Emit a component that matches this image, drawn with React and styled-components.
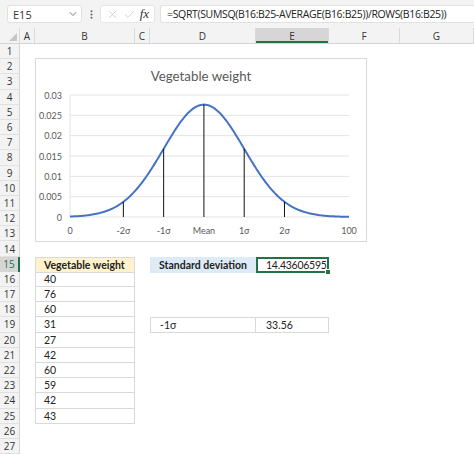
import React from "react";
import styled, { createGlobalStyle } from "styled-components";
import { ChevronDown, EllipsisVertical, X, Check } from "lucide-react";

const GlobalStyle = createGlobalStyle`
  html, body {
    margin: 0;
    padding: 0;
    background: #ffffff;
    overflow: hidden;
  }
  body {
    font-family: Lato, "Liberation Sans", sans-serif;
    color: #222;
  }
`;

const COLS = "20px 15px 100px 15px 106px 73px 71px 74px";
const ROW_H = 15.2;

const values = [40, 76, 60, 31, 27, 42, 60, 59, 42, 43];
const MEAN = 48;
const SD = 14.43606595;

const Page = styled.div`
  width: 474px;
  height: 455px;
  overflow: hidden;
`;

const FormulaBar = styled.div`
  height: 28px;
  background: #f3f3f3;
  display: flex;
  align-items: center;
  padding-left: 7px;
  box-sizing: border-box;
  font-family: "Open Sans", "Liberation Sans", sans-serif;
  font-size: 11px;
  color: #222;
`;

const NameBox = styled.div`
  width: 75px;
  height: 18px;
  box-sizing: border-box;
  background: #fff;
  border: 1px solid #e1e1e1;
  border-radius: 3px;
  display: flex;
  align-items: center;
  justify-content: space-between;
  padding: 0 2px 0 5px;
  color: #333;
`;

const Dots = styled.div`
  width: 18px;
  display: flex;
  justify-content: center;
  color: #666;
`;

const FxBox = styled.div`
  width: 55px;
  height: 18px;
  box-sizing: border-box;
  background: #fff;
  border: 1px solid #e6e6e6;
  border-radius: 3px;
  display: flex;
  align-items: center;
  justify-content: space-around;
  padding: 0 3px;
  color: #c2c2c2;
`;

const Fx = styled.span`
  font-family: "Liberation Serif", serif;
  font-style: italic;
  font-size: 13px;
  color: #333;
`;

const FormulaInput = styled.div`
  flex: 1;
  margin-left: 5px;
  height: 18px;
  box-sizing: border-box;
  background: #fff;
  border: 1px solid #e1e1e1;
  border-right: none;
  border-radius: 3px 0 0 3px;
  display: flex;
  align-items: center;
  padding-left: 6px;
  white-space: nowrap;
  overflow: hidden;
  color: #222;
  font-size: 10.5px;
  letter-spacing: -0.35px;
`;

const HeaderRow = styled.div`
  display: grid;
  grid-template-columns: ${COLS};
  height: 16px;
  background: #f3f3f3;
  border-bottom: 1px solid #d4d4d4;
  box-sizing: border-box;
  font-family: "Open Sans", "Liberation Sans", sans-serif;
  font-size: 10px;
  color: #333;
`;

const ColHead = styled.div`
  display: flex;
  align-items: center;
  justify-content: center;
  border-right: 1px solid #dadada;
  background: ${(p) => (p.$active ? "#d6d6d6" : "transparent")};
  box-shadow: ${(p) => (p.$active ? "inset 0 -2px 0 #217346" : "none")};
`;

const Corner = styled.div`
  position: relative;
  border-right: 1px solid #dadada;
  &::after {
    content: "";
    position: absolute;
    right: 2px;
    bottom: 2px;
    border-style: solid;
    border-width: 0 0 8px 8px;
    border-color: transparent transparent #c6c6c6 transparent;
  }
`;

const Sheet = styled.div`
  position: relative;
`;

const Row = styled.div`
  display: grid;
  grid-template-columns: ${COLS};
  height: ${ROW_H}px;
`;

const RowHead = styled.div`
  background: ${(p) => (p.$active ? "#d6d6d6" : "#f3f3f3")};
  color: ${(p) => (p.$active ? "#217346" : "#333")};
  border-bottom: 1px solid #e1e1e1;
  border-right: ${(p) => (p.$active ? "2px solid #217346" : "1px solid #d4d4d4")};
  box-sizing: border-box;
  display: flex;
  align-items: center;
  justify-content: center;
  font-family: "Open Sans", "Liberation Sans", sans-serif;
  font-size: 10px;
`;

const Cell = styled.div`
  position: relative;
  box-sizing: border-box;
  display: flex;
  align-items: center;
  padding-left: ${(p) => (p.$pad ?? 8)}px;
  font-size: 10.5px;
  white-space: nowrap;
  font-weight: ${(p) => (p.$bold ? 700 : 400)};
  background: ${(p) => p.$bg || "transparent"};
  border-right: ${(p) => (p.$box ? "1px solid #d9d9d9" : "none")};
  border-bottom: ${(p) => (p.$box ? "1px solid #d9d9d9" : "none")};
  border-left: ${(p) => (p.$left ? "1px solid #d9d9d9" : "none")};
  border-top: ${(p) => (p.$top ? "1px solid #d9d9d9" : "none")};
  color: #222;
`;

const ActiveCell = styled(Cell)`
  border: 2px solid #217346;
  padding-left: 8px;
  letter-spacing: -0.25px;
  &::after {
    content: "";
    position: absolute;
    right: -4px;
    bottom: -4px;
    width: 4px;
    height: 4px;
    background: #217346;
    border: 1px solid #fff;
  }
`;

const ChartBox = styled.div`
  position: absolute;
  left: 35px;
  top: 14px;
  width: 332px;
  height: 184px;
  box-sizing: border-box;
  background: #fff;
  border: 1px solid #d9d9d9;
`;

const ChartSvg = styled.svg`
  display: block;
  font-family: Lato, "Liberation Sans", sans-serif;
`;

function pdf(x) {
  return Math.exp(-((x - MEAN) ** 2) / (2 * SD * SD)) / (SD * Math.sqrt(2 * Math.PI));
}

const X0 = 34;
const X1 = 313;
const Y0 = 158;
const YTOP = 36;
const px = (x) => X0 + (x / 100) * (X1 - X0);
const py = (v) => Y0 - (v / 0.03) * (Y0 - YTOP);

function Chart() {
  const pts = [];
  for (let x = 0; x <= 100; x += 0.5) {
    pts.push(`${px(x).toFixed(2)},${py(pdf(x)).toFixed(2)}`);
  }
  const ticks = [0, 0.005, 0.01, 0.015, 0.02, 0.025, 0.03];
  const sig = [-2, -1, 0, 1, 2];
  const sigLabel = ["-2σ", "-1σ", "Mean", "1σ", "2σ"];
  return (
    <ChartBox>
      <ChartSvg width="330" height="182" viewBox="0 0 330 182">
        <text x="165" y="22" textAnchor="middle" fontSize="13.3" fill="#595959">
          Vegetable weight
        </text>
        {ticks.map((t) => (
          <g key={t}>
            <line x1={X0} x2={X1} y1={py(t)} y2={py(t)} stroke="#e3e3e3" strokeWidth="1" />
            <text x="26" y={py(t) + 3.5} textAnchor="end" fontSize="9" fill="#595959">
              {t}
            </text>
          </g>
        ))}
        <line x1={X0} x2={X0} y1={YTOP} y2={Y0} stroke="#e3e3e3" />
        <polyline points={pts.join(" ")} fill="none" stroke="#4472c4" strokeWidth="2" />
        {sig.map((k, i) => {
          const x = MEAN + k * SD;
          return (
            <g key={k}>
              <line x1={px(x)} x2={px(x)} y1={Y0} y2={py(pdf(x))} stroke="#111" strokeWidth="1" />
              <text x={px(x)} y="175" textAnchor="middle" fontSize="9" fill="#595959">
                {sigLabel[i]}
              </text>
            </g>
          );
        })}
        <text x={X0} y="175" textAnchor="middle" fontSize="9" fill="#595959">0</text>
        <text x={X1} y="175" textAnchor="middle" fontSize="9" fill="#595959">100</text>
      </ChartSvg>
    </ChartBox>
  );
}

function renderCells(r) {
  const empty = (k) => <Cell key={k} />;
  const cells = [empty("a")];
  if (r === 15) {
    cells.push(
      <Cell key="b" $box $left $top $bold $bg="#fff2cc">Vegetable weight</Cell>
    );
  } else if (r >= 16 && r <= 25) {
    cells.push(
      <Cell key="b" $box $left>{values[r - 16]}</Cell>
    );
  } else {
    cells.push(empty("b"));
  }
  cells.push(empty("c"));
  if (r === 15) {
    cells.push(<Cell key="d" $bold $bg="#ddebf7" $pad={9}>Standard deviation</Cell>);
    cells.push(<ActiveCell key="e">14.43606595</ActiveCell>);
  } else if (r === 19) {
    cells.push(<Cell key="d" $box $left $top $pad={9}>-1σ</Cell>);
    cells.push(<Cell key="e" $box $top $pad={10}>33.56</Cell>);
  } else {
    cells.push(empty("d"));
    cells.push(empty("e"));
  }
  cells.push(empty("f"));
  cells.push(empty("g"));
  return cells;
}

export default function App() {
  const rows = Array.from({ length: 27 }, (_, i) => i + 1);
  return (
    <Page>
      <GlobalStyle />
      <FormulaBar>
        <NameBox>
          <span>E15</span>
          <ChevronDown size={12} color="#555" strokeWidth={1.6} />
        </NameBox>
        <Dots>
          <EllipsisVertical size={11} strokeWidth={2.5} />
        </Dots>
        <FxBox>
          <X size={13} strokeWidth={1.3} />
          <Check size={13} strokeWidth={1.3} />
          <Fx>fx</Fx>
        </FxBox>
        <FormulaInput>=SQRT(SUMSQ(B16:B25-AVERAGE(B16:B25))/ROWS(B16:B25))</FormulaInput>
      </FormulaBar>
      <HeaderRow>
        <Corner />
        {["A", "B", "C", "D", "E", "F", "G"].map((c) => (
          <ColHead key={c} $active={c === "E"}>{c}</ColHead>
        ))}
      </HeaderRow>
      <Sheet>
        {rows.map((r) => (
          <Row key={r}>
            <RowHead $active={r === 15}>{r}</RowHead>
            {renderCells(r)}
          </Row>
        ))}
        <Chart />
      </Sheet>
    </Page>
  );
}
